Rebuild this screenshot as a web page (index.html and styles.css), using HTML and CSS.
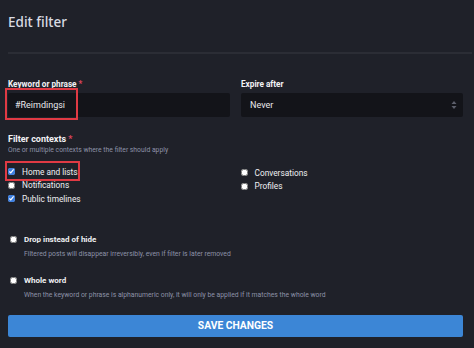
FILE: index.html
```html
<!DOCTYPE html>
<html lang="en">
<head>
    <meta charset="UTF-8">
    <meta name="viewport" content="width=device-width, initial-scale=1.0">
    <title>Edit filter</title>
    <link rel="stylesheet" href="styles.css">
</head>
<body>
    <div class="page">
        <h1 class="title">Edit filter</h1>
        <div class="divider"></div>

        <form class="filter-form" onsubmit="return false">
            <div class="fields">
                <div class="field">
                    <label class="label">Keyword or phrase <span class="req">*</span></label>
                    <div class="input-wrap">
                        <input class="input" type="text" value="#Reimdingsi">
                        <span class="mark mark-keyword"></span>
                    </div>
                </div>
                <div class="field">
                    <label class="label">Expire after</label>
                    <div class="select">
                        <span>Never</span>
                        <svg class="arrows" width="6" height="10" viewBox="0 0 6 10">
                            <path d="M3 1 L5.5 4 H0.5 Z M3 9 L5.5 6 H0.5 Z" fill="#5c5f6b"/>
                        </svg>
                    </div>
                </div>
            </div>

            <div class="section-title">Filter contexts <span class="req">*</span></div>
            <div class="hint">One or multiple contexts where the filter should apply</div>

            <div class="contexts">
                <div class="col">
                    <label class="check-row">
                        <input type="checkbox" checked> Home and lists
                        <span class="mark mark-home"></span>
                    </label>
                    <label class="check-row"><input type="checkbox"> Notifications</label>
                    <label class="check-row"><input type="checkbox" checked> Public timelines</label>
                </div>
                <div class="col col-right">
                    <label class="check-row"><input type="checkbox"> Conversations</label>
                    <label class="check-row"><input type="checkbox"> Profiles</label>
                </div>
            </div>

            <div class="option option-drop">
                <label class="check-row strong"><input type="checkbox"> Drop instead of hide</label>
                <div class="option-hint">Filtered posts will disappear irreversibly, even if filter is later removed</div>
            </div>

            <div class="option option-whole">
                <label class="check-row strong"><input type="checkbox"> Whole word</label>
                <div class="option-hint">When the keyword or phrase is alphanumeric only, it will only be applied if it matches the whole word</div>
            </div>

            <button class="save" type="submit">SAVE CHANGES</button>
        </form>
    </div>
</body>
</html>
```

FILE: styles.css
```css
* {
    box-sizing: border-box;
    margin: 0;
    padding: 0;
}

body {
    background-color: #1f2129;
    color: #ffffff;
    font-family: Roboto, "Liberation Sans", Arial, sans-serif;
    height: 348px;
    overflow: hidden;
}

.page {
    padding: 0 2px 0 8px;
}

.title {
    margin-top: 14px;
    font-family: "Noto Sans", "Open Sans", sans-serif;
    font-size: 13.5px;
    font-weight: 500;
    line-height: 16px;
    color: #d9dbe3;
}

.divider {
    height: 2px;
    margin-top: 22px;
    background-color: #2b2d35;
}

.filter-form {
    margin-right: 9px;
}

.fields {
    display: grid;
    grid-template-columns: 1fr 1fr;
    gap: 11px;
    margin-top: 25px;
}

.label {
    display: block;
    font-size: 8.2px;
    font-weight: 700;
    line-height: 10px;
    color: #f2f2f5;
}

.req {
    color: #e0455e;
}

.input-wrap {
    position: relative;
    margin-top: 4px;
}

.input {
    display: block;
    width: 100%;
    height: 24px;
    padding-left: 7px;
    border: none;
    border-radius: 2px;
    outline: none;
    background-color: #131419;
    color: #e8e8ec;
    font-family: Roboto, "Liberation Sans", Arial, sans-serif;
    font-size: 9px;
}

.select {
    display: flex;
    align-items: center;
    justify-content: space-between;
    height: 24px;
    margin-top: 4px;
    padding: 0 6px 0 9px;
    border-radius: 2px;
    background-color: #131419;
    color: #e8e8ec;
    font-size: 9px;
}

.mark {
    position: absolute;
    border: 2px solid #e03a44;
    pointer-events: none;
}

.mark-keyword {
    left: -3px;
    top: -5px;
    width: 73px;
    height: 32px;
}

.section-title {
    margin-top: 17px;
    font-size: 9px;
    font-weight: 700;
    line-height: 11px;
    color: #f2f2f5;
}

.hint {
    margin-top: 1px;
    font-size: 6.8px;
    line-height: 9px;
    color: #8d92a8;
}

.contexts {
    display: grid;
    grid-template-columns: 1fr 1fr;
    gap: 10px;
    margin-top: 10px;
}

.col-right {
    padding-top: 1px;
}

.check-row {
    position: relative;
    display: flex;
    align-items: center;
    height: 13.5px;
    font-size: 8.3px;
    color: #f0f0f3;
}

.check-row input {
    width: 7px;
    height: 7px;
    margin: 0 7px 0 0;
    accent-color: #3d7fe0;
}

.mark-home {
    left: -3px;
    top: -4px;
    width: 75px;
    height: 20px;
}

.option {
    padding-left: 2px;
}

.option-drop {
    margin-top: 29px;
}

.option-whole {
    margin-top: 18px;
}

.strong {
    font-weight: 700;
    font-size: 8px;
    height: 10px;
}

.option-hint {
    margin-top: 5px;
    padding-left: 14px;
    font-size: 6.8px;
    line-height: 8px;
    color: #8d92a8;
}

.save {
    display: block;
    width: 100%;
    height: 22px;
    margin-top: 16px;
    border: none;
    border-radius: 2px;
    background-color: #3c86d6;
    color: #ffffff;
    font-family: Roboto, "Liberation Sans", Arial, sans-serif;
    font-size: 10.3px;
    font-weight: 700;
    cursor: pointer;
}
```
